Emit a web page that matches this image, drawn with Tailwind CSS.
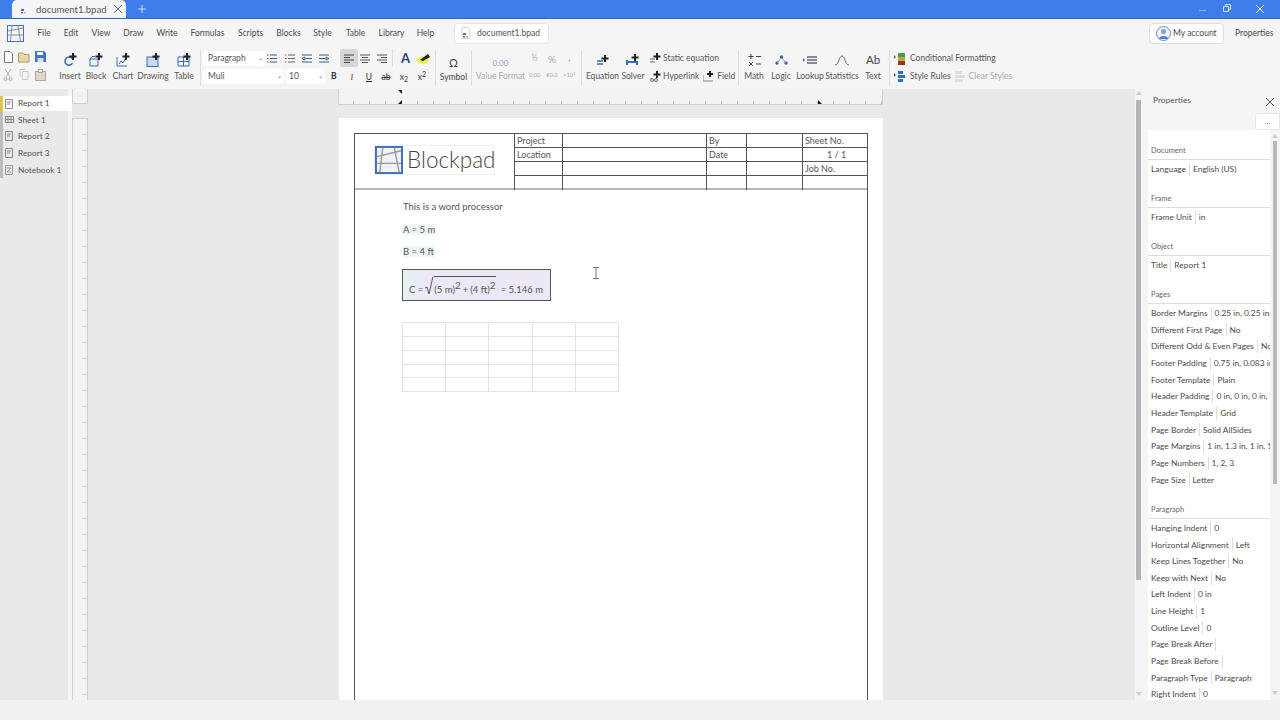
<!DOCTYPE html>
<html lang="en">
<head>
  <meta charset="UTF-8" />
  <title>Blockpad</title>
  <script src="https://cdn.jsdelivr.net/npm/@tailwindcss/browser@4"></script>
</head>
<body class="w-[1280px] h-[720px] overflow-hidden bg-[#f5f5f6] text-[#4a4a4a] font-['Lato','Liberation_Sans',sans-serif] text-[8.5px] leading-none">

  <!-- Title bar -->
  <div class="h-[19px] bg-[#3f7deb] border-b border-[#2f68c4] flex items-end relative">
    <div class="ml-[12px] w-[114px] h-[18px] bg-[#f5f5f6] rounded-t-[5px] flex items-center">
      <svg class="ml-[8px] w-[8px] h-[10px]" viewBox="0 0 8 10"><rect x="1" y="5" width="3" height="2" fill="#4a76b8"/><rect x="1" y="8" width="2" height="1.5" fill="#4a76b8"/><rect x="4" y="8" width="2" height="1.5" fill="#a8b8d0"/></svg>
      <span class="ml-[8px] mt-[1px] text-[9.5px] text-[#555]">document1.bpad</span>
      <svg class="ml-[8px] w-[8px] h-[8px]" viewBox="0 0 8 8" stroke="#777" fill="none"><path d="M0 0L8 8M8 0L0 8"/></svg>
    </div>
    <svg class="ml-[12px] mb-[5px] w-[8px] h-[8px]" viewBox="0 0 8 8" stroke="#cfe0fb" fill="none"><path d="M4 0V8M0 4H8"/></svg>
    <div class="ml-auto flex items-center h-[18px] mr-[16px]">
      <div class="w-[7px] h-px bg-[#8fb4f0] mt-[3px]"></div>
      <svg class="ml-[17px] mb-[2px] w-[8px] h-[8px]" viewBox="0 0 8 8" stroke="#d7e4fa" fill="none"><path d="M.5 2.500H5.500V7.500H.5ZM2.500 2.500V.5H7.500V5.500H5.500"/></svg>
      <svg class="ml-[25px] w-[8px] h-[8px]" viewBox="0 0 8 8" stroke="#eef4fe" fill="none"><path d="M0 0L8 8M8 0L0 8"/></svg>
    </div>
  </div>

  <!-- Menu row -->
  <div class="h-[28px] flex items-center relative">
    <svg class="ml-[7px] w-[17px] h-[17px] shrink-0" viewBox="0 0 17 17" fill="none"><rect x=".5" y=".5" width="16" height="16" fill="#f2f6fb" stroke="#3f72b8"/><path d="M1 6L16 3M1 10H16M5 1L3.500 16M11 1L13.500 16" stroke="#8b8f96"/></svg>
    <div class="flex items-center text-center ml-[7px]">
      <span class="w-[26px]">File</span>
      <span class="w-[28px]">Edit</span>
      <span class="w-[32px]">View</span>
      <span class="w-[33px]">Draw</span>
      <span class="w-[34px]">Write</span>
      <span class="w-[47px]">Formulas</span>
      <span class="w-[39px]">Scripts</span>
      <span class="w-[37px]">Blocks</span>
      <span class="w-[31px]">Style</span>
      <span class="w-[35px]">Table</span>
      <span class="w-[37px]">Library</span>
      <span class="w-[31px]">Help</span>
    </div>
    <div class="ml-[13px] w-[95px] h-[21px] bg-white border border-[#e6e6e6] rounded-[4px] flex items-center">
      <svg class="ml-[6px] w-[10px] h-[12px]" viewBox="0 0 10 12" fill="none"><path d="M1 .5H6.500L9 3V11.500H1Z" stroke="#d5d5d5"/><rect x="2" y="6" width="3" height="2" fill="#4a76b8"/><rect x="2" y="9" width="2" height="1.500" fill="#4a76b8"/><rect x="5" y="9" width="2" height="1.500" fill="#a8b8d0"/></svg>
      <span class="ml-[6px] text-[#555]">document1.bpad</span>
    </div>
    <div class="ml-auto flex items-center">
      <div class="w-[75px] h-[21px] bg-white border border-[#ddd] rounded-[4px] flex items-center">
        <svg class="ml-[6px] w-[15px] h-[15px]" viewBox="0 0 15 15"><circle cx="7.500" cy="7.500" r="7" fill="#eef2f8" stroke="#6d8cb8"/><circle cx="7.500" cy="5.500" r="2.500" fill="#7ea0cf"/><path d="M3 13C3 9 12 9 12 13Z" fill="#4f7fc0"/></svg>
        <span class="ml-[2px]">My account</span>
      </div>
      <span class="ml-[11px] mr-[7px] w-[38px] text-center">Properties</span>
    </div>
  </div>

  <!-- Toolbar -->
  <div class="h-[42px] flex text-[#555]">
    <!-- file actions -->
    <div class="w-[48px] mr-[9px] pt-[4px] grid grid-cols-3 justify-items-center content-start gap-y-[6px]">
      <svg class="w-[11px] h-[12px]" viewBox="0 0 11 12" fill="#fff" stroke="#777"><path d="M1.500 .5H7L9.500 3V11.500H1.500Z"/></svg>
      <svg class="w-[13px] h-[12px]" viewBox="0 0 13 12" fill="#ead9a0" stroke="#a99a66"><path d="M.5 2H5L6 3.500H11V11H.5Z"/></svg>
      <svg class="w-[11px] h-[11px]" viewBox="0 0 11 11"><path d="M0 0H9L11 2V11H0Z" fill="#3f72c8"/><rect x="2" y="1" width="6" height="3" fill="#fff"/><rect x="2.500" y="7" width="6" height="4" fill="#d4e0f4"/></svg>
      <svg class="w-[10px] h-[12px]" viewBox="0 0 10 12" fill="none" stroke="#b9a9b9"><path d="M2 0L7 8M8 0L3 8"/><circle cx="2.500" cy="10" r="1.500"/><circle cx="7.500" cy="10" r="1.500"/></svg>
      <svg class="w-[10px] h-[11px]" viewBox="0 0 10 11" fill="none" stroke="#c9c9c9"><path d="M3.500 2.500H9V10.500H3.500ZM1 8V.5H6"/></svg>
      <svg class="w-[11px] h-[12px]" viewBox="0 0 11 12" fill="#ded8c4" stroke="#a8a8a0"><path d="M.5 2.500H10.500V11.500H.5Z"/><rect x="3.500" y=".5" width="4" height="3" fill="#eee"/></svg>
    </div>
    <div class="w-[143px] flex text-center pt-[6px]">
      <div class="w-[26px] flex flex-col items-center">
        <svg class="w-[14px] h-[14px]" viewBox="0 0 14 14" fill="none"><path d="M9 5.500A4 4 0 1 0 9.500 10" stroke="#2f6fc0" stroke-width="1.500"/><path d="M10 0V7M6.500 3.500H13.500" stroke="#222" stroke-width="2"/></svg>
        <span class="mt-[5px]">Insert</span>
      </div>
      <div class="w-[26px] flex flex-col items-center">
        <svg class="w-[14px] h-[14px]" viewBox="0 0 14 14" fill="none"><path d="M1 6H9V13H1ZM1 6L3 3.500H6" stroke="#2f6fc0"/><path d="M10 0V7M6.500 3.500H13.500" stroke="#222" stroke-width="2"/></svg>
        <span class="mt-[5px]">Block</span>
      </div>
      <div class="w-[28px] flex flex-col items-center">
        <svg class="w-[14px] h-[14px]" viewBox="0 0 14 14" fill="none"><path d="M1 4V13H11M3 11L5 8L7 10L9 6" stroke="#2f6fc0"/><path d="M10 0V7M6.500 3.500H13.500" stroke="#222" stroke-width="2"/></svg>
        <span class="mt-[5px]">Chart</span>
      </div>
      <div class="w-[32px] flex flex-col items-center">
        <svg class="w-[14px] h-[14px]" viewBox="0 0 14 14" fill="none"><rect x="1" y="4" width="11" height="9.500" fill="#cbd9ee" stroke="#2f6fc0"/><path d="M10 0V7M6.500 3.500H13.500" stroke="#222" stroke-width="2"/></svg>
        <span class="mt-[5px]">Drawing</span>
      </div>
      <div class="w-[30px] flex flex-col items-center">
        <svg class="w-[14px] h-[14px]" viewBox="0 0 14 14" fill="none"><path d="M1 4H12V13H1ZM1 8.500H12M6.500 4V13" stroke="#2f6fc0"/><path d="M10 0V7M6.500 3.500H13.500" stroke="#222" stroke-width="2"/></svg>
        <span class="mt-[5px]">Table</span>
      </div>
    </div>
    <div class="w-px h-[36px] mt-[3px] bg-[#ddd]"></div>

    <!-- text formatting -->
    <div class="w-[134px] ml-[2px] pt-[4px]">
      <div class="flex items-center h-[15px]">
        <div class="w-[62px] h-[15px] bg-white rounded-[3px] flex items-center pl-[5px] relative">Paragraph<span class="absolute right-[2px] top-[4px] text-[6px]">&#8964;</span></div>
        <div class="flex ml-[2px] items-center">
          <svg class="w-[10px] h-[9px]" viewBox="0 0 10 9" stroke="#3c5a88" fill="none"><path d="M3 1H10M3 4.500H10M3 8H10M0 1H1.500M0 4.500H1.500M0 8H1.500"/></svg>
          <svg class="ml-[8px] w-[10px] h-[9px]" viewBox="0 0 10 9" stroke="#666" fill="none"><path d="M3 1H10M3 4.500H10M3 8H10M0 1H1.500M0 4.500H1.500M0 8H1.500"/></svg>
          <svg class="ml-[7px] w-[10px] h-[9px]" viewBox="0 0 10 9" stroke="#3c5a88" fill="none"><path d="M0 1H10M4 4.500H10M0 8H10M0 4.500L3 3V6Z"/></svg>
          <svg class="ml-[7px] w-[10px] h-[9px]" viewBox="0 0 10 9" stroke="#3c5a88" fill="none"><path d="M0 1H10M0 4.500H6M0 8H10M10 4.500L7 3V6Z"/></svg>
        </div>
      </div>
      <div class="flex items-center h-[15px] mt-[3px]">
        <div class="w-[81px] h-[15px] bg-white rounded-[3px] flex items-center pl-[5px] relative">Muli<span class="absolute right-[2px] top-[4px] text-[6px]">&#8964;</span></div>
        <div class="w-[39px] h-[15px] ml-[2px] bg-white rounded-[3px] flex items-center pl-[3px] relative">10<span class="absolute right-[2px] top-[4px] text-[6px]">&#8964;</span></div>
        <span class="ml-[6px] font-bold text-[#333]">B</span>
      </div>
    </div>
    <div class="w-[104px] pt-[2px] -mr-[6px]">
      <div class="flex items-center h-[18px]">
        <div class="w-[18px] h-[18px] bg-[#d6d6d6] rounded-[2px] flex items-center justify-center ml-[3px]">
          <svg class="w-[10px] h-[9px]" viewBox="0 0 10 9" stroke="#444" fill="none"><path d="M0 1H10M0 3.500H6M0 6H10M0 8.500H6"/></svg>
        </div>
        <svg class="ml-[2px] w-[10px] h-[9px]" viewBox="0 0 10 9" stroke="#555" fill="none"><path d="M0 1H10M2 3.500H8M0 6H10M2 8.500H8"/></svg>
        <svg class="ml-[7px] w-[10px] h-[9px]" viewBox="0 0 10 9" stroke="#555" fill="none"><path d="M0 1H10M4 3.500H10M0 6H10M4 8.500H10"/></svg>
        <div class="w-px h-[18px] bg-[#ddd] ml-[5px]"></div>
        <span class="ml-[8px] text-[13px] font-bold text-[#26408a]">A</span>
        <svg class="ml-[7px] w-[13px] h-[11px]" viewBox="0 0 13 11"><ellipse cx="6" cy="7" rx="6" ry="4" fill="#f0ee50"/><path d="M3 7L11 1L13 4L6 8Z" fill="#222"/></svg>
      </div>
      <div class="flex items-center h-[15px] mt-[3px] text-[#333] -ml-[2px]">
        <span class="ml-[13px] italic w-[8px] text-center">I</span>
        <span class="ml-[9px] underline w-[8px] text-center">U</span>
        <span class="ml-[8px] line-through w-[10px] text-center">ab</span>
        <span class="ml-[8px] w-[10px] text-center">x<sub class="text-[7px]">2</sub></span>
        <span class="ml-[8px] w-[10px] text-center">x<sup class="text-[7px]">2</sup></span>
      </div>
    </div>
    <div class="w-px h-[36px] mt-[3px] bg-[#ddd]"></div>
    <div class="w-[35px] flex flex-col items-center pt-[10px] text-[#444]">
      <span class="text-[11px] h-[12px]">&#937;</span>
      <span class="mt-[4px]">Symbol</span>
    </div>
    <div class="w-px h-[36px] mt-[3px] bg-[#ddd]"></div>
    <div class="w-[54px] pl-[3px] flex flex-col items-center pt-[12px] text-[#aaa]">
      <span class="text-[8px] h-[10px] text-[#8f9fc4]">0.00</span>
      <span class="mt-[3px] whitespace-nowrap">Value Format</span>
    </div>
    <div class="w-[55px] pr-[3px] grid grid-cols-3 justify-items-center content-start pt-[7px] gap-y-[9px] text-[#a9a9a9]">
      <span>&#189;</span><span class="text-[10px]">%</span><span class="font-bold">,</span>
      <span class="text-[5.500px]">0.00</span><span class="text-[5.500px]">&#8364;0.0</span><span class="text-[5.500px]">&#215;10<sup>3</sup></span>
    </div>
    <div class="w-px h-[36px] mt-[3px] bg-[#ddd]"></div>

    <!-- insert items -->
    <div class="w-[41px] flex flex-col items-center pt-[6px]">
      <svg class="w-[14px] h-[14px]" viewBox="0 0 14 14" fill="none"><path d="M1 8H7M1 11H7" stroke="#2f6fc0" stroke-width="1.500"/><path d="M9 2V9M5.500 5.500H12.500" stroke="#222" stroke-width="2"/></svg>
      <span class="mt-[5px]">Equation</span>
    </div>
    <div class="w-[20px] flex flex-col items-center pt-[6px]">
      <svg class="w-[14px] h-[14px]" viewBox="0 0 14 14" fill="none"><path d="M1 7V12M1 9H11V12" stroke="#2f6fc0" stroke-width="2"/><path d="M9 1V8M5.500 4.500H12.500" stroke="#222" stroke-width="2"/></svg>
      <span class="mt-[5px]">Solver</span>
    </div>
    <div class="w-[88px] ml-[7px] pt-[4px]">
      <div class="flex items-center h-[15px]">
        <svg class="w-[11px] h-[11px]" viewBox="0 0 11 11" fill="none"><path d="M0 6H5M0 9H5" stroke="#666"/><path d="M7 0V7M3.500 3.500H10.500" stroke="#222" stroke-width="2"/></svg>
        <span class="ml-[2px]">Static equation</span>
      </div>
      <div class="flex items-center h-[15px] mt-[3px]">
        <svg class="w-[11px] h-[11px]" viewBox="0 0 11 11" fill="none"><circle cx="2" cy="9" r="1.500" stroke="#666"/><circle cx="6" cy="9" r="1.500" stroke="#666"/><path d="M7 0V7M3.500 3.500H10.500" stroke="#222" stroke-width="2"/></svg>
        <span class="ml-[2px]">Hyperlink</span>
        <svg class="ml-[4px] w-[11px] h-[11px]" viewBox="0 0 11 11" fill="none"><path d="M0 4V10H10" stroke="#888"/><path d="M7 0V6M4 3H10" stroke="#222" stroke-width="2"/></svg>
        <span class="ml-[3px]">Field</span>
      </div>
    </div>
    <div class="w-px h-[36px] mt-[3px] bg-[#ddd]"></div>
    <div class="w-[30px] flex flex-col items-center pt-[7px]">
      <svg class="w-[13px] h-[13px]" viewBox="0 0 13 13" fill="none" stroke="#444"><path d="M3 0V5M.5 2.500H5.500M8 2.500H13M1 8L5 12M5 8L1 12M8 10H13"/></svg>
      <span class="mt-[5px]">Math</span>
    </div>
    <div class="w-[24px] flex flex-col items-center pt-[7px]">
      <svg class="w-[13px] h-[13px]" viewBox="0 0 13 13" fill="#3560a8"><circle cx="6.500" cy="3" r="1.700"/><circle cx="2" cy="9" r="1.700"/><circle cx="11" cy="9" r="1.700"/><path d="M6 4L2 9M7 4L11 9" stroke="#999"/></svg>
      <span class="mt-[5px]">Logic</span>
    </div>
    <div class="w-[34px] flex flex-col items-center pt-[7px]">
      <svg class="w-[14px] h-[13px]" viewBox="0 0 14 13" fill="none"><path d="M4 3H14M4 6H14M4 9H14" stroke="#667" stroke-width="1.500"/><path d="M0 4L2 6L0 8Z" fill="#2f6fc0"/></svg>
      <span class="mt-[5px]">Lookup</span>
    </div>
    <div class="w-[30px] flex flex-col items-center pt-[7px]">
      <svg class="w-[14px] h-[13px]" viewBox="0 0 14 13" fill="none" stroke="#666"><path d="M0 11C4 11 4 2 7 2S10 11 14 11"/></svg>
      <span class="mt-[5px]">Statistics</span>
    </div>
    <div class="w-[32px] flex flex-col items-center pt-[7px]">
      <span class="text-[11.500px] h-[13px] text-[#444]">Ab</span>
      <span class="mt-[5px]">Text</span>
    </div>
    <div class="w-px h-[36px] mt-[3px] bg-[#ddd]"></div>

    <!-- styles -->
    <div class="pt-[4px] ml-[4px]">
      <div class="flex items-center h-[15px]">
        <svg class="w-[11px] h-[12px]" viewBox="0 0 11 12"><path d="M0 2L2 4L0 6Z" fill="#2f6fc0"/><rect x="4" y="0" width="7" height="4" fill="#4d9a4d"/><rect x="4" y="4" width="7" height="4" fill="#c9a23c"/><rect x="4" y="8" width="7" height="4" fill="#8a3b2a"/></svg>
        <span class="ml-[5px]">Conditional Formatting</span>
      </div>
      <div class="flex items-center h-[15px] mt-[3px]">
        <svg class="w-[11px] h-[12px]" viewBox="0 0 11 12"><path d="M0 2L2 4L0 6Z" fill="#2f6fc0"/><rect x="4" y="0" width="5" height="3" fill="#2f6fc0"/><rect x="4" y="4" width="7" height="3" fill="#2f6fc0"/><rect x="4" y="8" width="5" height="3" fill="#2f6fc0"/></svg>
        <span class="ml-[5px]">Style Rules</span>
        <svg class="ml-[4px] w-[10px] h-[11px]" viewBox="0 0 10 11" fill="#ddd"><rect y="0" width="7" height="3"/><rect y="4" width="10" height="3"/><rect y="8" width="8" height="3"/></svg>
        <span class="ml-[4px] text-[#aaa]">Clear Styles</span>
      </div>
    </div>
  </div>

  <!-- Main area -->
  <div class="h-[611px] flex">
    <!-- Sheet list -->
    <div class="w-[72px] shrink-0 bg-[#f5f5f6] text-[8.300px]">
      <div class="w-[68px] h-[611px] pt-[7px] bg-[#e9e9e9]">
        <div class="w-[72px] h-[15px] bg-white border-l-[3px] border-[#e3c547] flex items-center pl-[2px]">
          <svg class="w-[8px] h-[10px]" viewBox="0 0 8 10" fill="none" stroke="#888"><path d="M.5 .5H7.500V9.500H.5ZM2 3H6M2 5H5"/></svg>
          <span class="ml-[5px]">Report 1</span>
        </div>
        <div class="h-[67px] pt-[0.6px] border-l-[3px] border-[#bdbdbd] text-[#555]">
          <div class="h-[16.600px] flex items-center pl-[2px]">
            <svg class="w-[9px] h-[7px]" viewBox="0 0 9 7" fill="none" stroke="#888"><path d="M.5 .5H8.500V6.500H.5ZM3 .5V6.500M6 .5V6.500M.5 3.500H8.500"/></svg>
            <span class="ml-[4px]">Sheet 1</span>
          </div>
          <div class="h-[16.600px] flex items-center pl-[2px]">
            <svg class="w-[8px] h-[10px]" viewBox="0 0 8 10" fill="none" stroke="#888"><path d="M.5 .5H7.500V9.500H.5ZM2 3H6M2 5H5"/></svg>
            <span class="ml-[5px]">Report 2</span>
          </div>
          <div class="h-[16.600px] flex items-center pl-[2px]">
            <svg class="w-[8px] h-[10px]" viewBox="0 0 8 10" fill="none" stroke="#888"><path d="M.5 .5H7.500V9.500H.5ZM2 3H6M2 5H5"/></svg>
            <span class="ml-[5px]">Report 3</span>
          </div>
          <div class="h-[16.600px] flex items-center pl-[2px]">
            <svg class="w-[8px] h-[10px]" viewBox="0 0 8 10" fill="none" stroke="#999"><path d="M.5 .5H7.500V9.500H.5ZM2 3H6L2 7H6"/></svg>
            <span class="ml-[5px]">Notebook 1</span>
          </div>
        </div>
      </div>
    </div>

    <!-- Vertical ruler -->
    <div class="w-[16px] shrink-0 bg-[#e9e9e9]">
      <div class="h-[15px] bg-[#f3f3f3] border border-t-0 border-[#cfcfcf]"></div>
      <div class="h-[582px] mt-[14px] border border-b-0 border-[#cfcfcf] bg-[#f3f3f3]">
        <div class="ml-auto w-[5px] h-full bg-[repeating-linear-gradient(to_bottom,transparent_0,transparent_15px,#d4d4d4_15px,#d4d4d4_16px)]"></div>
      </div>
    </div>

    <!-- Canvas -->
    <div class="w-[1047px] shrink-0 bg-[#e9e9e9] pl-[250px] overflow-hidden relative">
      <!-- Horizontal ruler -->
      <div class="w-[545px] h-[16px] bg-[#f3f3f3] border border-t-0 border-[#cfcfcf] relative overflow-hidden">
        <svg class="absolute left-0 top-0" width="545" height="16"><defs><pattern id="ticks" width="16" height="16" patternUnits="userSpaceOnUse" x="62"><path d="M.5 12V15" stroke="#bbb"/></pattern></defs><rect width="545" height="16" fill="url(#ticks)"/><path d="M59 1H63V5Z" fill="#222"/><path d="M59 15H63V11Z" fill="#222"/><path d="M479 11L483 15H479Z" fill="#222"/></svg>
      </div>
      <!-- Page -->
      <div class="w-[544px] h-[582px] mt-[13px] ml-px bg-white pt-[15px] pl-[15px]">
        <div class="w-[514px] h-[567px] border-x border-[#555]">
          <!-- Header -->
          <div class="flex h-[57px] border-b-2 border-[#b5b5b5] border-t border-t-[#555]">
            <div class="w-[159px] pt-[11px] pl-[19px] shrink-0">
              <div class="w-[121px] h-[30px] flex items-center border border-[#f0f0f0]">
                <svg class="w-[28px] h-[28px] shrink-0" viewBox="0 0 29 29" fill="none"><rect x="1" y="1" width="27" height="27" fill="#eef1f5" stroke="#3f6fb5" stroke-width="2"/><path d="M2 11L27 5M2 18H27M8 2L5 27M20 2L25 27" stroke="#9a9a9a" stroke-width="1.500"/></svg>
                <span class="ml-[4px] text-[22.500px] font-light text-[#444]">Blockpad</span>
              </div>
            </div>
            <table class="table-fixed border-collapse text-[9px] text-[#555] w-[353px] h-[56px]">
              <colgroup><col class="w-[48px]"><col class="w-[144px]"><col class="w-[40px]"><col class="w-[56px]"><col class="w-[65px]"></colgroup>
              <tr class="h-[13px]"><td class="border border-t-0 border-[#555] pl-[2px]">Project</td><td class="border border-t-0 border-[#555]"></td><td class="border border-t-0 border-[#555] pl-[2px]">By</td><td class="border border-t-0 border-[#555]"></td><td class="border border-t-0 border-r-0 border-[#555] pl-[2px]">Sheet No.</td></tr>
              <tr class="h-[14px]"><td class="border border-[#555] pl-[2px]">Location</td><td class="border border-[#555]"></td><td class="border border-[#555] pl-[2px]">Date</td><td class="border border-[#555]"></td><td class="border border-r-0 border-[#555] pl-[24px]">1 / 1</td></tr>
              <tr class="h-[14px]"><td class="border border-[#555]"></td><td class="border border-[#555]"></td><td class="border border-[#555]"></td><td class="border border-[#555]"></td><td class="border border-r-0 border-[#555] pl-[2px]">Job No.</td></tr>
              <tr class="h-[15px]"><td class="border border-b-0 border-[#555]"></td><td class="border border-b-0 border-[#555]"></td><td class="border border-b-0 border-[#555]"></td><td class="border border-b-0 border-[#555]"></td><td class="border border-b-0 border-r-0 border-[#555]"></td></tr>
            </table>
          </div>

          <!-- Page body -->
          <div class="pl-[47px] text-[9.500px] text-[#555]">
            <p class="mt-[12px] pl-[1px] h-[10px]">This is a word processor</p>
            <p class="mt-[13px] pl-[1px] h-[10px]"><span class="bg-[#eef5f5]">A = 5 m</span></p>
            <p class="mt-[12px] pl-[1px] h-[10px]"><span class="bg-[#eef5f5]">B = 4 ft</span></p>
            <div class="mt-[12px] w-[149px] h-[32px] border border-[#555] bg-[linear-gradient(to_right,#e6f2f2,#ece8f6_15%)] flex items-end pl-[6px] pb-[6px] whitespace-nowrap">
              <span>C =</span>
              <svg class="ml-[2px] w-[9px] h-[19px] -mb-[1px]" viewBox="0 0 9 19" fill="none" stroke="#555"><path d="M0 12L2 11L4 18L8 .5"/></svg>
              <span class="border-t border-[#555] h-[19px] -mb-[1px] flex items-end pb-[1px]">(5 m)<sup class="top-0 leading-none text-[10px] self-start mt-[3px]">2</sup><span class="mx-[2px]">+</span>(4 ft)<sup class="top-0 leading-none text-[10px] self-start mt-[3px]">2</sup></span>
              <span class="ml-[5px]">= 5.146 m</span>
            </div>
            <div class="mt-[21px] w-[217px] grid grid-cols-5 border-t border-l border-[#e3e3e3]">
              <div class="h-[14px] border-r border-b border-[#e3e3e3]"></div><div class="border-r border-b border-[#e3e3e3]"></div><div class="border-r border-b border-[#e3e3e3]"></div><div class="border-r border-b border-[#e3e3e3]"></div><div class="border-r border-b border-[#e3e3e3]"></div>
              <div class="h-[14px] border-r border-b border-[#e3e3e3]"></div><div class="border-r border-b border-[#e3e3e3]"></div><div class="border-r border-b border-[#e3e3e3]"></div><div class="border-r border-b border-[#e3e3e3]"></div><div class="border-r border-b border-[#e3e3e3]"></div>
              <div class="h-[14px] border-r border-b border-[#e3e3e3]"></div><div class="border-r border-b border-[#e3e3e3]"></div><div class="border-r border-b border-[#e3e3e3]"></div><div class="border-r border-b border-[#e3e3e3]"></div><div class="border-r border-b border-[#e3e3e3]"></div>
              <div class="h-[13px] border-r border-b border-[#e3e3e3]"></div><div class="border-r border-b border-[#e3e3e3]"></div><div class="border-r border-b border-[#e3e3e3]"></div><div class="border-r border-b border-[#e3e3e3]"></div><div class="border-r border-b border-[#e3e3e3]"></div>
              <div class="h-[14px] border-r border-b border-[#e3e3e3]"></div><div class="border-r border-b border-[#e3e3e3]"></div><div class="border-r border-b border-[#e3e3e3]"></div><div class="border-r border-b border-[#e3e3e3]"></div><div class="border-r border-b border-[#e3e3e3]"></div>
            </div>
          </div>
        </div>
      </div>
      <!-- text cursor -->
      <svg class="absolute left-[505px] top-[178px] w-[6px] h-[12px]" viewBox="0 0 6 12" fill="none" stroke="#777"><path d="M0 .5H6M0 11.500H6M3 .5V11.500"/></svg>
    </div>

    <!-- Canvas scrollbar -->
    <div class="w-[7px] shrink-0 flex flex-col items-center bg-[#f5f5f6] relative">
      <div class="mt-[2px] w-0 h-0 border-x-[3px] border-x-transparent border-b-[4px] border-b-[#ccc]"></div>
      <div class="mt-[5px] w-[5px] h-[480px] bg-[#b4b4b4]"></div>
      <div class="absolute top-[603px] w-0 h-0 border-x-[3px] border-x-transparent border-t-[4px] border-t-[#ccc]"></div>
    </div>

    <!-- Properties panel -->
    <div class="w-[138px] shrink-0 relative overflow-hidden text-[8.400px]">
      <div class="h-[24px] pl-[11px] pt-[7px] flex justify-between">
        <span class="text-[#555]">Properties</span>
        <svg class="mr-[6px] mt-[2px] w-[8px] h-[8px]" viewBox="0 0 8 8" stroke="#555" fill="none"><path d="M0 0L8 8M8 0L0 8"/></svg>
      </div>
      <div class="h-[17px] flex justify-end">
        <div class="w-[25px] h-[17px] bg-white border border-[#e6e6e6] rounded-l-[3px] text-center text-[#777] text-[8px] pt-[3px]">...</div>
      </div>
      <div class="flex">
        <div class="w-[122px] h-[570px] ml-[6px] bg-white overflow-hidden pt-[16px] whitespace-nowrap">
          <div class="h-[14px] pt-[1px] pl-[3px] text-[7.500px] text-[#666] border-b border-[#ddd]">Document</div>
          <div class="h-[18px] pl-[3px] flex items-center"><span>Language</span><span class="ml-[3px] pl-[3px] border-l border-[#ddd] h-[13px] flex items-center">English (US)</span></div>
          <div class="mt-[16px] h-[14px] pt-[1px] pl-[3px] text-[7.500px] text-[#666] border-b border-[#ddd]">Frame</div>
          <div class="h-[18px] pl-[3px] flex items-center"><span>Frame Unit</span><span class="ml-[3px] pl-[3px] border-l border-[#ddd] h-[13px] flex items-center">in</span></div>
          <div class="mt-[16px] h-[14px] pt-[1px] pl-[3px] text-[7.500px] text-[#666] border-b border-[#ddd]">Object</div>
          <div class="h-[18px] pl-[3px] flex items-center"><span>Title</span><span class="ml-[3px] pl-[3px] border-l border-[#ddd] h-[13px] flex items-center">Report 1</span></div>
          <div class="mt-[16px] h-[14px] pt-[1px] pl-[3px] text-[7.500px] text-[#666] border-b border-[#ddd]">Pages</div>
          <div class="pt-[1px]">
            <div class="h-[16.670px] pl-[3px] flex items-center"><span>Border Margins</span><span class="ml-[3px] pl-[3px] border-l border-[#ddd] h-[13px] flex items-center">0.25 in, 0.25 in, 0.25 in</span></div>
            <div class="h-[16.670px] pl-[3px] flex items-center"><span>Different First Page</span><span class="ml-[3px] pl-[3px] border-l border-[#ddd] h-[13px] flex items-center">No</span></div>
            <div class="h-[16.670px] pl-[3px] flex items-center"><span>Different Odd &amp; Even Pages</span><span class="ml-[3px] pl-[3px] border-l border-[#ddd] h-[13px] flex items-center">No</span></div>
            <div class="h-[16.670px] pl-[3px] flex items-center"><span>Footer Padding</span><span class="ml-[3px] pl-[3px] border-l border-[#ddd] h-[13px] flex items-center">0.75 in, 0.083 in, 0 in</span></div>
            <div class="h-[16.670px] pl-[3px] flex items-center"><span>Footer Template</span><span class="ml-[3px] pl-[3px] border-l border-[#ddd] h-[13px] flex items-center">Plain</span></div>
            <div class="h-[16.670px] pl-[3px] flex items-center"><span>Header Padding</span><span class="ml-[3px] pl-[3px] border-l border-[#ddd] h-[13px] flex items-center">0 in, 0 in, 0 in, 0 in</span></div>
            <div class="h-[16.670px] pl-[3px] flex items-center"><span>Header Template</span><span class="ml-[3px] pl-[3px] border-l border-[#ddd] h-[13px] flex items-center">Grid</span></div>
            <div class="h-[16.670px] pl-[3px] flex items-center"><span>Page Border</span><span class="ml-[3px] pl-[3px] border-l border-[#ddd] h-[13px] flex items-center">Solid AllSides</span></div>
            <div class="h-[16.670px] pl-[3px] flex items-center"><span>Page Margins</span><span class="ml-[3px] pl-[3px] border-l border-[#ddd] h-[13px] flex items-center">1 in, 1.3 in, 1 in, 1.3 in</span></div>
            <div class="h-[16.670px] pl-[3px] flex items-center"><span>Page Numbers</span><span class="ml-[3px] pl-[3px] border-l border-[#ddd] h-[13px] flex items-center">1, 2, 3</span></div>
            <div class="h-[16.670px] pl-[3px] flex items-center"><span>Page Size</span><span class="ml-[3px] pl-[3px] border-l border-[#ddd] h-[13px] flex items-center">Letter</span></div>
          </div>
          <div class="mt-[16.500px] h-[14px] pt-[1px] pl-[3px] text-[7.500px] text-[#666] border-b border-[#ddd]">Paragraph</div>
          <div class="pt-[1px]">
            <div class="h-[16.670px] pl-[3px] flex items-center"><span>Hanging Indent</span><span class="ml-[3px] pl-[3px] border-l border-[#ddd] h-[13px] flex items-center">0</span></div>
            <div class="h-[16.670px] pl-[3px] flex items-center"><span>Horizontal Alignment</span><span class="ml-[3px] pl-[3px] border-l border-[#ddd] h-[13px] flex items-center">Left</span></div>
            <div class="h-[16.670px] pl-[3px] flex items-center"><span>Keep Lines Together</span><span class="ml-[3px] pl-[3px] border-l border-[#ddd] h-[13px] flex items-center">No</span></div>
            <div class="h-[16.670px] pl-[3px] flex items-center"><span>Keep with Next</span><span class="ml-[3px] pl-[3px] border-l border-[#ddd] h-[13px] flex items-center">No</span></div>
            <div class="h-[16.670px] pl-[3px] flex items-center"><span>Left Indent</span><span class="ml-[3px] pl-[3px] border-l border-[#ddd] h-[13px] flex items-center">0 in</span></div>
            <div class="h-[16.670px] pl-[3px] flex items-center"><span>Line Height</span><span class="ml-[3px] pl-[3px] border-l border-[#ddd] h-[13px] flex items-center">1</span></div>
            <div class="h-[16.670px] pl-[3px] flex items-center"><span>Outline Level</span><span class="ml-[3px] pl-[3px] border-l border-[#ddd] h-[13px] flex items-center">0</span></div>
            <div class="h-[16.670px] pl-[3px] flex items-center"><span>Page Break After</span><span class="ml-[3px] pl-[3px] border-l border-[#ddd] h-[13px] flex items-center"></span></div>
            <div class="h-[16.670px] pl-[3px] flex items-center"><span>Page Break Before</span><span class="ml-[3px] pl-[3px] border-l border-[#ddd] h-[13px] flex items-center"></span></div>
            <div class="h-[16.670px] pl-[3px] flex items-center"><span>Paragraph Type</span><span class="ml-[3px] pl-[3px] border-l border-[#ddd] h-[13px] flex items-center">Paragraph</span></div>
            <div class="h-[16.670px] pl-[3px] flex items-center"><span>Right Indent</span><span class="ml-[3px] pl-[3px] border-l border-[#ddd] h-[13px] flex items-center">0</span></div>
          </div>
        </div>
        <div class="w-[10px] flex flex-col items-center relative">
          <div class="mt-[4px] w-0 h-0 border-x-[3px] border-x-transparent border-b-[4px] border-b-[#ccc]"></div>
          <div class="mt-[3px] w-[4px] h-[343px] bg-[#b9b9b9]"></div>
          <div class="absolute top-[561px] w-0 h-0 border-x-[3px] border-x-transparent border-t-[4px] border-t-[#ccc]"></div>
        </div>
      </div>
    </div>
  </div>

  <!-- Bottom bar -->
  <div class="h-[20px] bg-[#f1f1f1]"></div>
</body>
</html>
